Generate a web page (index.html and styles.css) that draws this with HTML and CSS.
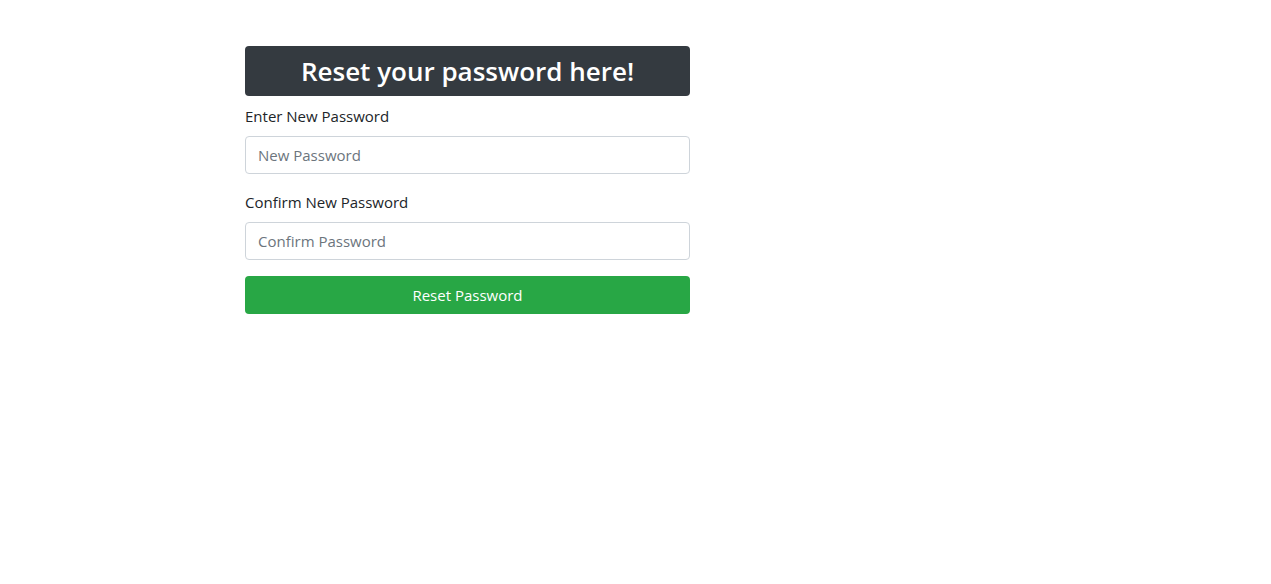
FILE: index.html
```html
<!DOCTYPE html>
<html lang="en">

<head>
    <meta charset="UTF-8">
    <meta name="viewport" content="width=device-width, initial-scale=1.0">
    <title>Reset Password</title>
    <link rel="stylesheet" href="styles.css">
</head>

<body>
    <div class="reset-wrapper">
        <!-- Cabeçalho do formulário -->
        <h3 class="reset-title">Reset your password here!</h3>

        <form id="resetForm">
            <div class="form-group">
                <label for="newPassword">Enter New Password</label>
                <input type="password" id="newPassword" name="newPassword" placeholder="New Password" required>
            </div>

            <div class="form-group">
                <label for="confirmPassword">Confirm New Password</label>
                <input type="password" id="confirmPassword" name="confirmPassword" placeholder="Confirm Password" required>
            </div>

            <button type="submit" class="btn-reset">Reset Password</button>
        </form>
    </div>
</body>

</html>
```

FILE: styles.css
```css
/* Estilos Gerais */
body,
html {
    margin: 0;
    padding: 0;
    background-color: #fff;
    color: #212529;
    font-family: 'Open Sans', 'Noto Sans', sans-serif;
    font-size: 15px;
    line-height: 24px;
}

/* Bloco do formulário */
.reset-wrapper {
    width: 445px;
    margin: 46px 0 0 245px;
}

.reset-title {
    margin: 0 0 8px 0;
    padding: 8px 0;
    background-color: #343a40;
    color: #fff;
    border-radius: 4px;
    font-size: 26px;
    font-weight: 600;
    line-height: 34px;
    text-align: center;
}

/* Campos */
.form-group {
    margin-bottom: 16px;
}

.form-group label {
    display: block;
    margin-bottom: 8px;
}

.form-group input {
    display: block;
    box-sizing: border-box;
    width: 100%;
    height: 38px;
    padding: 6px 12px;
    border: 1px solid #ced4da;
    border-radius: 4px;
    font-family: inherit;
    font-size: 15px;
    color: #495057;
}

.form-group input::placeholder {
    color: #6c757d;
}

/* Botão */
.btn-reset {
    display: block;
    width: 100%;
    height: 38px;
    padding: 6px 12px;
    background-color: #28a745;
    color: #fff;
    border: none;
    border-radius: 4px;
    font-family: inherit;
    font-size: 15px;
    cursor: pointer;
}

.btn-reset:hover {
    background-color: #218838;
}
```
